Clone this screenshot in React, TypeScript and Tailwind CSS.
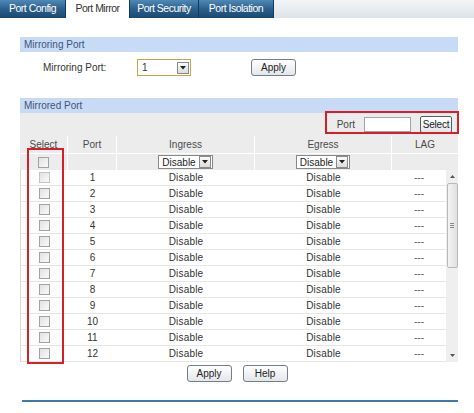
import React from "react";

const Tab = ({ label, w, active }: { label: string; w: string; active?: boolean }) => (
  <div
    className={
      (active
        ? "bg-white text-[#333] "
        : "bg-gradient-to-b from-[#5089b6] via-[#2c5f8b] to-[#1a4a72] text-white ") +
      w +
      " h-full flex items-center justify-center border-r border-[#123a5c] text-[10.5px] tracking-[-0.5px]"
    }
  >
    {label}
  </div>
);

const Arrow = () => (
  <div className="w-[12px] h-[12px] border border-[#8a8a8a] bg-gradient-to-b from-[#fafafa] to-[#dcdcdc] flex items-center justify-center">
    <svg width="6" height="4" viewBox="0 0 6 4">
      <path d="M0 0 L6 0 L3 3.5 Z" fill="#222" />
    </svg>
  </div>
);

const Check = ({ light }: { light?: boolean }) => (
  <div
    className={
      "w-[11px] h-[11px] border bg-gradient-to-br from-[#e2e2e2] to-[#fafafa] " +
      (light ? "border-[#c4c4c4]" : "border-[#a2a2a2]")
    }
  />
);

const Btn = ({ label, w }: { label: string; w: string }) => (
  <div
    className={
      w +
      " h-[17px] rounded-[3px] border border-[#6f7f8e] bg-gradient-to-b from-white to-[#e3e6ea] flex items-center justify-center text-[#222]"
    }
  >
    {label}
  </div>
);

const Dis = () => (
  <div className="h-[14px] border border-[#888] bg-white flex items-center pl-[3px] pr-[1px] gap-[3px]">
    <span className="text-[#222]">Disable</span>
    <Arrow />
  </div>
);

export default function App() {
  const rows = Array.from({ length: 12 }, (_, i) => i + 1);
  return (
    <div
      className="relative w-[474px] h-[413px] overflow-hidden bg-white text-[10px] text-[#333]"
      style={{ fontFamily: '"Liberation Sans", Arial, sans-serif' }}
    >
      {/* tabs */}
      <div className="flex h-[18px] bg-gradient-to-b from-[#f3f5f7] to-[#dde3e8]">
        <Tab label="Port Config" w="w-[66px]" />
        <Tab label="Port Mirror" w="w-[64px]" active />
        <Tab label="Port Security" w="w-[69px]" />
        <Tab label="Port Isolation" w="w-[75px]" />
      </div>

      {/* Mirroring Port */}
      <div className="ml-[20px] w-[438px] mt-[19px]">
        <div className="h-[15px] bg-[#c8dbf6] text-[#3c5576] pl-[4px] flex items-center">Mirroring Port</div>
        <div className="flex items-center h-[30px] pt-[1px]">
          <div className="ml-[23px] w-[94px] text-[#333]">Mirroring Port:</div>
          <div className="w-[54px] h-[17px] border border-[#c9a64a] flex items-center justify-between pl-[4px] pr-[1px] bg-white">
            <span>1</span>
            <Arrow />
          </div>
          <div className="ml-[60px]">
            <Btn label="Apply" w="w-[45px]" />
          </div>
        </div>
      </div>

      {/* Mirrored Port */}
      <div className="ml-[20px] w-[438px] mt-[16px]">
        <div className="h-[15px] bg-[#c8dbf6] text-[#3c5576] pl-[4px] flex items-center">Mirrored Port</div>
        <div className="h-[23px] bg-[#ececec] flex items-center justify-end pr-[6px]">
          <span className="text-[#444]">Port</span>
          <div className="ml-[9px] w-[47px] h-[15px] border border-[#9aa6b3] bg-white" />
          <div className="ml-[9px]">
            <div className="w-[32px] h-[17px] rounded-[2px] border border-[#4f5e6c] bg-gradient-to-b from-white to-[#e3e6ea] flex items-center justify-center text-[#222] tracking-[-0.2px]">
              Select
            </div>
          </div>
        </div>
        {/* header */}
        <div className="flex h-[17px] bg-[#ececec] text-[#4a4a4a]">
          <div className="w-[48px] border-r border-white flex items-center justify-center">Select</div>
          <div className="w-[49px] border-r border-white flex items-center justify-center">Port</div>
          <div className="w-[138px] border-r border-white flex items-center justify-center">Ingress</div>
          <div className="w-[137px] border-r border-white flex items-center justify-center">Egress</div>
          <div className="w-[66px] flex items-center justify-center">LAG</div>
        </div>
        <div className="flex h-[17px] bg-[#ececec] border-t border-white">
          <div className="w-[48px] border-r border-white flex items-center justify-center">
            <Check />
          </div>
          <div className="w-[49px] border-r border-white" />
          <div className="w-[138px] border-r border-white flex items-center justify-center">
            <Dis />
          </div>
          <div className="w-[137px] border-r border-white flex items-center justify-center">
            <Dis />
          </div>
          <div className="w-[66px]" />
        </div>
        {/* data */}
        <div className="flex border-l border-[#d8d8d8]">
          <div className="w-[425px]">
            {rows.map((n) => (
              <div key={n} className="flex h-[16px] border-b border-[#e6e6e6] items-center text-[#333]">
                <div className="w-[47px] flex justify-center">
                  <Check light={n === 1} />
                </div>
                <div className="w-[49px] text-center">{n}</div>
                <div className="w-[138px] text-center tracking-[0.2px]">Disable</div>
                <div className="w-[137px] text-center tracking-[0.2px]">Disable</div>
                <div className="w-[54px] text-center text-[#555]">---</div>
              </div>
            ))}
          </div>
          <div className="w-[13px] bg-[#efefef] flex flex-col items-center">
            <div className="h-[13px] flex items-center justify-center">
              <svg width="5" height="3" viewBox="0 0 5 3">
                <path d="M0 3 L5 3 L2.5 0 Z" fill="#555" />
              </svg>
            </div>
            <div className="w-[11px] h-[85px] rounded-[2px] border border-[#b8b8b8] bg-gradient-to-r from-[#f4f4f4] to-[#e0e0e0] flex items-center justify-center">
              <div className="flex flex-col gap-[1px]">
                <div className="w-[4px] h-px bg-[#888]" />
                <div className="w-[4px] h-px bg-[#888]" />
                <div className="w-[4px] h-px bg-[#888]" />
              </div>
            </div>
            <div className="flex-1" />
            <div className="h-[13px] flex items-center justify-center">
              <svg width="5" height="3" viewBox="0 0 5 3">
                <path d="M0 0 L5 0 L2.5 3 Z" fill="#555" />
              </svg>
            </div>
          </div>
        </div>
        <div className="flex justify-center gap-[11px] mt-[3px] pr-[4px]">
          <Btn label="Apply" w="w-[45px]" />
          <Btn label="Help" w="w-[45px]" />
        </div>
        <div className="mt-[18px] ml-[2px] h-[2px] bg-[#3f78a8]" />
      </div>

      {/* red annotations */}
      <div className="absolute left-[27px] top-[148px] w-[37px] h-[216px] border-2 border-[#d3202a]" />
      <div className="absolute left-[325px] top-[111px] w-[134px] h-[23px] border-2 border-[#d3202a]" />
    </div>
  );
}
